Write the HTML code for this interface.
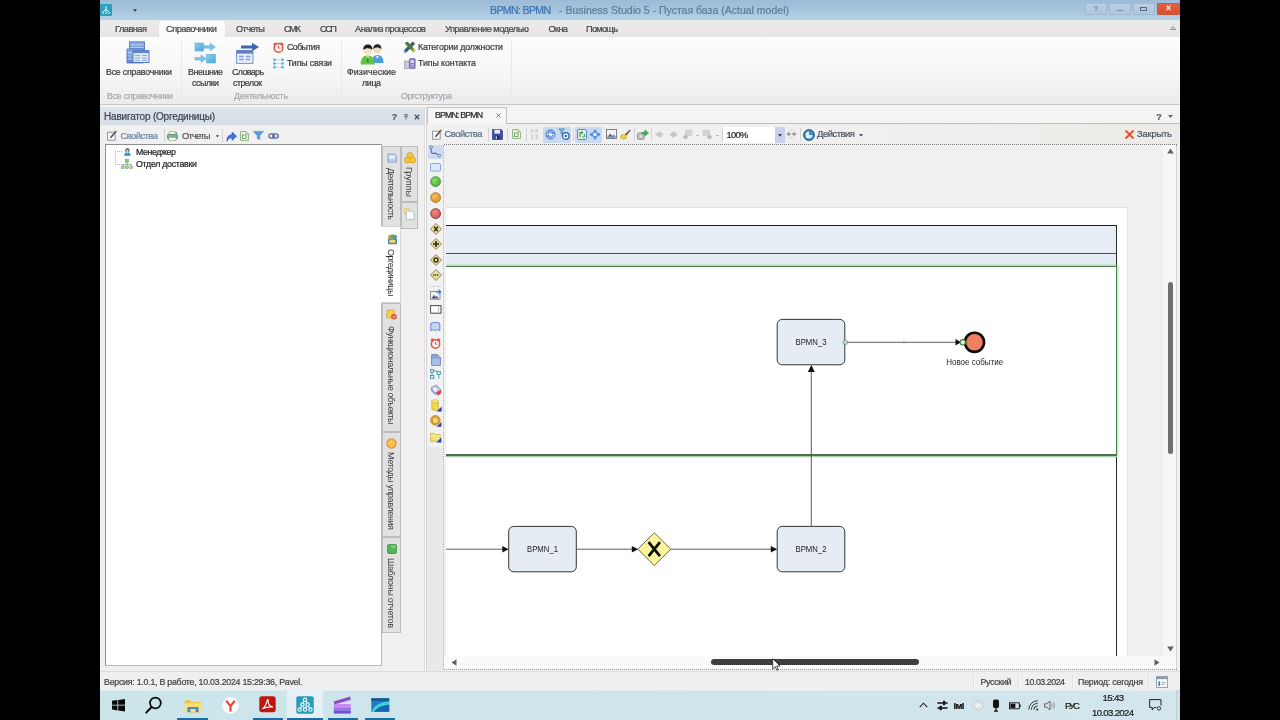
<!DOCTYPE html>
<html lang="ru">
<head>
<meta charset="utf-8">
<title>BPMN: BPMN - Business Studio 5</title>
<style>
*{box-sizing:border-box;margin:0;padding:0}
html,body{width:1280px;height:720px;overflow:hidden;background:#000}
body{font-family:"Liberation Sans","DejaVu Sans",sans-serif;font-size:9px;color:#333;position:relative}
#app{position:absolute;left:100px;top:0;width:1080px;height:720px;background:#f0f0f0;overflow:hidden;filter:blur(0.5px)}
#app div,#app span,#app svg{position:absolute}
#app svg{overflow:visible}
.t{white-space:nowrap;line-height:1.16;-webkit-text-stroke:0.22px}
</style>
</head>
<body>

<div id="app">
<div style="left:0px;top:0px;width:1080px;height:20px;background:linear-gradient(#9dbbd6 0%,#a7c4dd 50%,#b3d0e6 92%,#bccfda 100%);"></div>
<svg style="left:0px;top:4px" width="12" height="12" viewBox="0 0 12 12"><rect width="12" height="12" rx="1" fill="#2ba3c0"/><path d="M6 2v3M6 5L3 8M6 5l3 3M3 8v2M9 8v2M6 5v5" stroke="#e8f7fb" stroke-width="1" fill="none"/></svg>
<svg style="left:32.5px;top:8.5px" width="4" height="3" viewBox="0 0 4 3"><path d="M0 0.3h4L2 2.8z" fill="#2b3a4a"/></svg>
<span class="t" style="left:390.0px;top:3.7px;font-size:10.50px;color:#3a74b4;letter-spacing:-0.612px;">BPMN: BPMN</span>
<span class="t" style="left:459.0px;top:3.7px;font-size:10.50px;color:#5d7d9c;letter-spacing:0.008px;">- Business Studio 5 - Пустая база (Actual model)</span>
<div style="left:985px;top:3.3px;width:22px;height:12px;background:linear-gradient(#bccfe4,#adc5de);border:1px solid #a3bbd4;border-radius:1px;"></div>
<div style="left:1009px;top:3.3px;width:22px;height:12px;background:linear-gradient(#bccfe4,#adc5de);border:1px solid #a3bbd4;border-radius:1px;"></div>
<div style="left:1033px;top:3.3px;width:22px;height:12px;background:linear-gradient(#bccfe4,#adc5de);border:1px solid #a3bbd4;border-radius:1px;"></div>
<div style="left:1057px;top:3.3px;width:23px;height:12px;background:linear-gradient(#e0623f,#d8502e);border:1px solid #c8583c;border-radius:1px;"></div>
<span class="t" style="left:994.0px;top:5.2px;font-size:6.50px;color:#7a8fa8;letter-spacing:0.000px;font-weight:bold;">?</span>
<div style="left:1017px;top:9.5px;width:6px;height:1.6px;background:#7a8fa8;"></div>
<div style="left:1040px;top:7px;width:7px;height:4px;border:1px solid #5a6b80;"></div>
<span class="t" style="left:1066.0px;top:4.1px;font-size:8.50px;color:#fbe9e2;letter-spacing:0.000px;font-weight:bold;">×</span>
<div style="left:0px;top:20px;width:1080px;height:17px;background:linear-gradient(#e9ebed,#ebe8e7 55%,#e4e4e4);"></div>
<div style="left:0px;top:37px;width:1080px;height:67px;background:linear-gradient(#fcfcfc 0%,#f7f7f7 55%,#ebebeb 100%);"></div>
<div style="left:0px;top:104px;width:1080px;height:1px;background:#c6c6c6;"></div>
<div style="left:0px;top:105px;width:1080px;height:2px;background:#f3f3f3;"></div>
<div style="left:59px;top:21px;width:66px;height:17px;background:#fbfbfb;border-radius:2px 2px 0 0;box-shadow:0 0 1px #cfcfcf;"></div>
<div style="left:59px;top:37px;width:66px;height:2px;background:#fbfbfb;"></div>
<span class="t" style="left:15.0px;top:23.7px;font-size:9.20px;color:#454545;letter-spacing:-0.503px;">Главная</span>
<span class="t" style="left:66.0px;top:23.7px;font-size:9.20px;color:#454545;letter-spacing:-0.474px;">Справочники</span>
<span class="t" style="left:136.0px;top:23.7px;font-size:9.20px;color:#454545;letter-spacing:-0.560px;">Отчеты</span>
<span class="t" style="left:184.0px;top:23.7px;font-size:9.20px;color:#454545;letter-spacing:-1.282px;">СМК</span>
<span class="t" style="left:220.0px;top:23.7px;font-size:9.20px;color:#454545;letter-spacing:-1.450px;">ССП</span>
<span class="t" style="left:255.0px;top:23.7px;font-size:9.20px;color:#454545;letter-spacing:-0.495px;">Анализ процессов</span>
<span class="t" style="left:345.0px;top:23.7px;font-size:9.20px;color:#454545;letter-spacing:-0.481px;">Управление моделью</span>
<span class="t" style="left:448.5px;top:23.7px;font-size:9.20px;color:#454545;letter-spacing:-0.626px;">Окна</span>
<span class="t" style="left:486.0px;top:23.7px;font-size:9.20px;color:#454545;letter-spacing:-0.707px;">Помощь</span>
<svg style="left:1069.5px;top:26px" width="6" height="5" viewBox="0 0 6 5"><path d="M3 0.5L5.5 3.5h-5z" fill="none" stroke="#777" stroke-width="0.8"/></svg>
<div style="left:81px;top:40px;width:1px;height:61px;background:#e9e9e9;"></div>
<div style="left:241px;top:40px;width:1px;height:61px;background:#e9e9e9;"></div>
<div style="left:411px;top:40px;width:1px;height:61px;background:#e9e9e9;"></div>
<span class="t" style="left:6.0px;top:67.4px;font-size:8.80px;color:#3a3a3a;letter-spacing:-0.212px;">Все справочники</span>
<span class="t" style="left:88.0px;top:67.4px;font-size:8.80px;color:#3a3a3a;letter-spacing:-0.392px;">Внешние</span>
<span class="t" style="left:92.0px;top:78.4px;font-size:8.80px;color:#3a3a3a;letter-spacing:-0.405px;">ссылки</span>
<span class="t" style="left:132.0px;top:67.4px;font-size:8.80px;color:#3a3a3a;letter-spacing:-0.572px;">Словарь</span>
<span class="t" style="left:133.0px;top:78.4px;font-size:8.80px;color:#3a3a3a;letter-spacing:-0.484px;">стрелок</span>
<span class="t" style="left:187.0px;top:41.9px;font-size:8.80px;color:#3a3a3a;letter-spacing:-0.554px;">События</span>
<span class="t" style="left:187.0px;top:58.4px;font-size:8.80px;color:#3a3a3a;letter-spacing:-0.126px;">Типы связи</span>
<span class="t" style="left:247.0px;top:67.4px;font-size:8.80px;color:#3a3a3a;letter-spacing:0.101px;">Физические</span>
<span class="t" style="left:262.0px;top:78.4px;font-size:8.80px;color:#3a3a3a;letter-spacing:-0.328px;">лица</span>
<span class="t" style="left:318.0px;top:41.9px;font-size:8.80px;color:#3a3a3a;letter-spacing:-0.150px;">Категории должности</span>
<span class="t" style="left:318.0px;top:58.4px;font-size:8.80px;color:#3a3a3a;letter-spacing:-0.062px;">Типы контакта</span>
<span class="t" style="left:7.0px;top:90.9px;font-size:8.80px;color:#a3a8ad;letter-spacing:-0.212px;">Все справочники</span>
<span class="t" style="left:134.0px;top:90.9px;font-size:8.80px;color:#a3a8ad;letter-spacing:-0.240px;">Деятельность</span>
<span class="t" style="left:301.0px;top:90.9px;font-size:8.80px;color:#a3a8ad;letter-spacing:-0.323px;">Оргструктура</span>
<div style="left:0px;top:107px;width:324px;height:18px;background:linear-gradient(#dee4ea,#d7dee6);"></div>
<span class="t" style="left:4.0px;top:111.2px;font-size:10.00px;color:#3c4654;letter-spacing:-0.192px;">Навигатор (Оргединицы)</span>
<span class="t" style="left:291.5px;top:110.8px;font-size:9.50px;color:#596573;letter-spacing:0.000px;font-weight:bold;">?</span>
<svg style="left:304px;top:113.5px" width="4" height="6" viewBox="0 0 4 6"><path d="M0.3 0.5h3.4M1 0.5v2.3M3 0.5v2.3M0.3 2.8h3.4M2 2.8v2.8" stroke="#596573" stroke-width="0.8" fill="none"/></svg>
<svg style="left:314px;top:113.5px" width="6" height="6" viewBox="0 0 6 6"><path d="M0.8 0.8l4.4 4.4M5.2 0.8L0.8 5.2" stroke="#4a5563" stroke-width="1.3"/></svg>
<div style="left:0px;top:125px;width:324px;height:547px;background:#f0f0f0;"></div>
<div style="left:5px;top:144px;width:277px;height:522px;background:#fff;border:1px solid #8e8e8e;border-right-color:#b9b9b9;border-bottom-color:#b9b9b9;"></div>
<span class="t" style="left:36.0px;top:146.9px;font-size:8.80px;color:#222;letter-spacing:-0.385px;">Менеджер</span>
<span class="t" style="left:36.0px;top:158.9px;font-size:8.80px;color:#222;letter-spacing:-0.277px;">Отдел доставки</span>
<div style="left:324px;top:107px;width:1px;height:565px;background:#dcdcdc;"></div>
<div style="left:325px;top:107px;width:1px;height:565px;background:#fafafa;"></div>
<div style="left:326px;top:107px;width:1px;height:565px;background:#d4d4d4;"></div>
<div style="left:327px;top:107px;width:753px;height:17px;background:#f4f4f4;"></div>
<div style="left:327px;top:123px;width:753px;height:1px;background:#bdbdbd;"></div>
<div style="left:327px;top:107px;width:80px;height:17px;background:#f6f6f6;border:1px solid #c6c6c6;border-bottom:none;border-radius:1px 1px 0 0;"></div>
<span class="t" style="left:335.0px;top:110.4px;font-size:8.80px;color:#2a2a2a;letter-spacing:-0.860px;">BPMN: BPMN</span>
<svg style="left:395.5px;top:112.5px" width="5" height="5" viewBox="0 0 5 5"><path d="M0.5 0.5l4 4M4.5 0.5l-4 4" stroke="#666" stroke-width="0.9"/></svg>
<span class="t" style="left:1056.0px;top:110.8px;font-size:9.50px;color:#596573;letter-spacing:0.000px;font-weight:bold;">?</span>
<svg style="left:1068px;top:115px" width="5" height="3" viewBox="0 0 5 3"><path d="M0 0h5L2.5 3z" fill="#666"/></svg>
<div style="left:327px;top:124px;width:753px;height:20px;background:linear-gradient(90deg,#f0f0f0 0%,#f0f0f0 55%,#ecebe7 100%);"></div>
<div style="left:344px;top:144px;width:733px;height:1px;border-top:1px dotted #7a7a7a;"></div>
<div style="left:1076px;top:145px;width:1px;height:524px;border-left:1px dotted #bdbdbd;"></div>
<div style="left:344px;top:669px;width:733px;height:1px;border-top:1px dotted #9a9a9a;"></div>
<div style="left:343px;top:145px;width:1px;height:524px;border-left:1px dotted #b5b5b5;"></div>
<div style="left:327px;top:145px;width:16px;height:527px;background:#e9e9e9;"></div>
<div style="left:327px;top:145px;width:16px;height:302px;background:#f2f2f2;"></div>
<div style="left:344px;top:145px;width:719px;height:511px;background:#f0f0f0;"></div>
<div style="left:1063px;top:145px;width:13px;height:511px;background:#f6f6f6;"></div>
<div style="left:344px;top:656px;width:732px;height:13px;background:#fafafa;"></div>
<div style="left:346px;top:207px;width:682px;height:449px;background:#fff;border-top:1px solid #e2e2e2;border-right:1px solid #e4e4e4;"></div>
<div style="left:346px;top:226px;width:670.5px;height:41px;background:#e6edf4;"></div>
<div style="left:346px;top:225px;width:671.3px;height:1.4px;background:#1c1c1c;"></div>
<div style="left:346px;top:253px;width:670.5px;height:1px;background:#4a4f55;"></div>
<div style="left:1016.3px;top:225px;width:1px;height:431px;background:#2a2a2a;"></div>
<div style="left:346px;top:266.3px;width:671.3px;height:189.5px;border:1.6px solid #4c7f4c;border-bottom:2.4px solid #4f6f52;border-left:none;box-shadow:0 0 2px 1px rgba(120,200,120,.6);clip-path:inset(-4px -4px -4px 0);"></div>
<div style="left:346px;top:455.6px;width:671.3px;height:1.3px;background:#a9cfa9;"></div>
<svg style="left:0;top:0" width="1080" height="690" viewBox="0 0 1080 690"><g transform="translate(-100,0)" font-family="Liberation Sans, sans-serif"><g stroke="#4a4a4a" stroke-width="0.9" fill="none"><path d="M446 549.2H503"/><path d="M577 549.2H633"/><path d="M671 549.2H772"/><path d="M811.3 526V371"/><path d="M847 342.3H957"/></g><g fill="#111"><path d="M502.3 545.9l6.4 3.3-6.4 3.3z"/><path d="M631.8 545.9l6.4 3.3-6.4 3.3z"/><path d="M770.8 545.9l6.4 3.3-6.4 3.3z"/><path d="M807.8 372l3.5-7 3.5 7z"/><path d="M955.5 339l5.5 3.3-5.5 3.3z"/></g><rect x="508.7" y="526.4" width="67.6" height="45.4" rx="5" ry="5" fill="#e5ecf3" stroke="#1e1e1e" stroke-width="0.9"/><text x="542.5" y="552.2" font-size="8.6" fill="#222" text-anchor="middle" textLength="31" lengthAdjust="spacingAndGlyphs">BPMN_1</text><rect x="777.2" y="526.4" width="67.6" height="45.4" rx="5" ry="5" fill="#e5ecf3" stroke="#1e1e1e" stroke-width="0.9"/><text x="811" y="552.2" font-size="8.6" fill="#222" text-anchor="middle" textLength="31" lengthAdjust="spacingAndGlyphs">BPMN_2</text><rect x="777.2" y="319.4" width="67.6" height="45.4" rx="5" ry="5" fill="#e5ecf3" stroke="#1e1e1e" stroke-width="0.9"/><text x="811" y="345.2" font-size="8.6" fill="#222" text-anchor="middle" textLength="31" lengthAdjust="spacingAndGlyphs">BPMN_3</text><path d="M654.3 532.8L670.8 549.2 654.3 565.6 637.8 549.2z" fill="#fbf49c" stroke="#5a5a4a" stroke-width="0.9"/><path d="M648.6 542.2l11.4 14M660 542.2l-11.4 14" stroke="#0a0a0a" stroke-width="2.7" fill="none"/><circle cx="845.3" cy="342.3" r="2.3" fill="#c4d8cc" stroke="#6f8f88" stroke-width="0.8"/><circle cx="904" cy="342.3" r="1.3" fill="#9d95cf"/><circle cx="974.5" cy="342.3" r="9.6" fill="#f0805f" stroke="#0d0d0d" stroke-width="2.6"/><circle cx="962.8" cy="342.3" r="2.7" fill="#dff0df" stroke="#3f7a3f" stroke-width="1.1"/><text x="974.7" y="364.8" font-size="8.6" fill="#222" text-anchor="middle" textLength="57" lengthAdjust="spacingAndGlyphs">Новое событие</text></g></svg>
<svg style="left:1066.5px;top:148px" width="7" height="6" viewBox="0 0 7 6"><path d="M3.5 0.5L6.8 5.5H0.2z" fill="#5f5f5f"/></svg>
<svg style="left:1066.5px;top:646px" width="7" height="6" viewBox="0 0 7 6"><path d="M0.2 0.5h6.6L3.5 5.5z" fill="#5f5f5f"/></svg>
<div style="left:1067.5px;top:282px;width:5.5px;height:172px;background:#6f6f6f;border-radius:3px;"></div>
<svg style="left:351px;top:658.5px" width="6" height="7" viewBox="0 0 6 7"><path d="M5.5 0.2v6.6L0.5 3.5z" fill="#5f5f5f"/></svg>
<svg style="left:1054px;top:658.5px" width="6" height="7" viewBox="0 0 6 7"><path d="M0.5 0.2v6.6L5.5 3.5z" fill="#5f5f5f"/></svg>
<div style="left:611px;top:659px;width:208px;height:5.5px;background:#3f3f3f;border-radius:3px;"></div>
<svg style="left:672px;top:658px" width="9" height="13" viewBox="0 0 9 13"><path d="M0.7 0.7v10.2l2.5-2.3 1.7 3.7 1.5-0.7-1.7-3.6h3.3z" fill="#fff" stroke="#222" stroke-width="0.8" stroke-linejoin="round"/></svg>
<svg style="left:26px;top:41px" width="24" height="24" viewBox="0 0 24 24"><defs><linearGradient id="gw" x1="0" y1="0" x2="0" y2="1"><stop offset="0" stop-color="#8fb0e6"/><stop offset="1" stop-color="#5f86cf"/></linearGradient></defs><rect x="3.5" y="0.8" width="15" height="12" fill="url(#gw)" stroke="#4d70b8" stroke-width="0.8"/><path d="M4.5 4h13M4.5 6.5h13M4.5 9h13" stroke="#c4d6f3" stroke-width="0.9"/><rect x="1" y="8" width="16" height="14" fill="url(#gw)" stroke="#4d70b8" stroke-width="0.8"/><path d="M2 12h14M2 15h14M2 18h14" stroke="#c4d6f3" stroke-width="0.9"/><rect x="7" y="9.5" width="16" height="12" fill="#dfe9fa" stroke="#4d70b8" stroke-width="0.9"/><rect x="7" y="9.5" width="16" height="2.6" fill="#5f86cf"/><path d="M9 14.5h5M16 14.5h5M9 17h5M16 17h5M9 19.3h5M16 19.3h5" stroke="#8aa9de" stroke-width="1"/></svg>
<svg style="left:94px;top:42px" width="22" height="22" viewBox="0 0 22 22"><defs><linearGradient id="gb" x1="0" y1="0" x2="1" y2="1"><stop offset="0" stop-color="#8fd0ee"/><stop offset="1" stop-color="#4ba6d6"/></linearGradient></defs><rect x="1" y="1" width="8.6" height="8" fill="url(#gb)" stroke="#5aaad6" stroke-width="0.6"/><path d="M10 3.8h6.2V1.2L21.4 5 16.2 8.8V6.2H10z" fill="#79c4e8" stroke="#5aaad6" stroke-width="0.5"/><rect x="12.6" y="12.4" width="8.8" height="8.6" fill="url(#gb)" stroke="#5aaad6" stroke-width="0.6"/><path d="M0.8 15.5h6.2v-2.6l5.2 3.8-5.2 3.8v-2.6H0.8z" fill="#79c4e8" stroke="#5aaad6" stroke-width="0.5"/></svg>
<svg style="left:136px;top:42px" width="24" height="22" viewBox="0 0 24 22"><path d="M5 3.4h11V0.8L23 5l-7 4.2V6.6H5z" fill="#3f66b3"/><rect x="0.6" y="8.4" width="16.4" height="13" fill="#e6edf8" stroke="#6b8cc9" stroke-width="0.9"/><rect x="0.6" y="8.4" width="16.4" height="3.2" fill="#5b80c6"/><path d="M3 14.6h4.6M9.8 14.6h4.6M3 17.6h4.6M9.8 17.6h4.6" stroke="#7f9fd6" stroke-width="1.5"/></svg>
<svg style="left:173px;top:42px" width="11" height="11" viewBox="0 0 11 11"><circle cx="2.3" cy="2.2" r="1.8" fill="#e2614f"/><circle cx="8.7" cy="2.2" r="1.8" fill="#e2614f"/><circle cx="5.5" cy="5.9" r="4.3" fill="#fdf3ef" stroke="#de5644" stroke-width="1.5"/><path d="M5.5 3.6v2.5h2" stroke="#c24d3e" stroke-width="0.8" fill="none"/></svg>
<svg style="left:173px;top:58px" width="11" height="11" viewBox="0 0 11 11"><g fill="#4da8dc"><rect x="0.3" y="0.6" width="2.4" height="2.2"/><rect x="0.3" y="4.4" width="2.4" height="2.2"/><rect x="0.3" y="8.2" width="2.4" height="2.2"/><rect x="8.3" y="0.6" width="2.4" height="2.2"/><rect x="8.3" y="4.4" width="2.4" height="2.2"/><rect x="8.3" y="8.2" width="2.4" height="2.2"/></g><path d="M3.2 1.7h4.6M3.2 5.5h4.6M3.2 9.3h4.6" stroke="#86c6ea" stroke-width="1" stroke-dasharray="1.2 0.8"/></svg>
<svg style="left:260px;top:43px" width="24" height="22" viewBox="0 0 24 22"><path d="M11.5 20c0-5 2-8 6-8s6 3 6 8z" fill="#4f9be0"/><circle cx="17.3" cy="6.6" r="3.9" fill="#f1d9bf"/><path d="M13.2 6.2c0-3.6 1.8-5 4.2-5s4.2 1.4 4 5c-1.6-1.6-5.4-2.6-8.2 0z" fill="#22221f"/><path d="M16 13l1.4 3 1.4-3z" fill="#e8f2fb"/><path d="M0.6 21.4c0-5.6 2.4-9 7-9s7 3.4 7 9z" fill="#64c43f"/><circle cx="7.8" cy="7.4" r="4.3" fill="#f6e2c8"/><path d="M3.2 7c0-4 2-5.6 4.6-5.6S12.6 3 12.4 7c-1.8-1.8-6-2.8-9.2 0z" fill="#1e1e1c"/><path d="M6.2 13.4l1.6 3.6 1.6-3.6z" fill="#eef8e8"/><path d="M7.2 14.6h1.2l0.5 4-1.1 1.3-1.1-1.3z" fill="#3d8a2a"/></svg>
<svg style="left:303px;top:41px" width="13" height="12" viewBox="0 0 13 12"><path d="M9.6 0.6l2.6 2.2L3.6 11.2 0.8 11.6 1.4 8.8z" fill="#3d5f73"/><path d="M1.4 8.8l2.2 2.4-2.8 0.4z" fill="#5b9bd8"/><path d="M2.6 1.2L4.8 0.8 12.4 9.6 10.6 11.4 2 2.8z" fill="#4a7a3a"/><path d="M9 7.2l3.4 2.4-1.8 1.8z" fill="#e8c93a"/></svg>
<svg style="left:304px;top:58px" width="12" height="11" viewBox="0 0 12 11"><rect x="0.4" y="3" width="4.8" height="7.6" fill="#c9ccd8" stroke="#8a8fa8" stroke-width="0.6"/><rect x="5.4" y="0.6" width="5.8" height="10" rx="0.8" fill="#8b7fc0" stroke="#6a5ea3" stroke-width="0.6"/><rect x="6.6" y="2" width="3.4" height="3" fill="#d9d4ef"/><path d="M6.6 6.6h3.4M6.6 8.2h3.4" stroke="#cfc8ea" stroke-width="0.8"/></svg>
<svg style="left:7px;top:129.5px" width="10" height="11" viewBox="0 0 10 11"><rect x="0.6" y="2.2" width="7.6" height="8" fill="#fbfbfb" stroke="#8a8a8a" stroke-width="0.9"/><path d="M8.8 0.4l1 1-5 6.2-1.8 0.8 0.6-1.8z" fill="#4a4a4a"/><path d="M8.8 0.4l1 1-0.9 1-1-1z" fill="#c7783c"/></svg>
<span class="t" style="left:20.5px;top:130.8px;font-size:9.40px;color:#6f88aa;letter-spacing:-0.540px;">Свойства</span>
<div style="left:64px;top:129px;width:1px;height:13px;background:#d5d5d5;"></div>
<svg style="left:67px;top:131px" width="11" height="10" viewBox="0 0 11 10"><path d="M2.6 0.6h5.6l1 3H1.6z" fill="#f4f7f4" stroke="#8a9a8a" stroke-width="0.6"/><rect x="0.5" y="3.4" width="10" height="4.6" rx="0.8" fill="#7fb58b" stroke="#4f8a5e" stroke-width="0.7"/><rect x="2" y="6.4" width="7" height="3" fill="#fdfdfd" stroke="#8a9a8a" stroke-width="0.6"/><path d="M8.6 1.2l1.6 1.4" stroke="#3a3a3a" stroke-width="1"/></svg>
<span class="t" style="left:82.0px;top:130.8px;font-size:9.40px;color:#555;letter-spacing:-0.798px;">Отчеты</span>
<svg style="left:115.5px;top:134.8px" width="3" height="3" viewBox="0 0 3 3"><path d="M0 0.3h3L1.5 2.6z" fill="#333"/></svg>
<div style="left:122px;top:129px;width:1px;height:13px;background:#d5d5d5;"></div>
<svg style="left:125.5px;top:130.5px" width="11" height="11" viewBox="0 0 11 11"><path d="M1 10.4C0.6 6 2.6 3.8 6 3.8V1l4.6 4.2L6 9.4V6.8C3.6 6.8 2 7.8 1 10.4z" fill="#3f72d8" stroke="#2c55b3" stroke-width="0.6" stroke-linejoin="round"/></svg>
<svg style="left:140px;top:131px" width="9" height="10" viewBox="0 0 9 10"><path d="M0.6 0.6h5.4l2.4 2.4v6.4H0.6z" fill="#f3f8ee" stroke="#84a874" stroke-width="0.9"/><path d="M6 0.6v2.4h2.4" fill="#dfe8d8" stroke="#84a874" stroke-width="0.7"/><rect x="2.4" y="4" width="3.6" height="3.4" fill="#fff" stroke="#5f9a55" stroke-width="0.9"/></svg>
<svg style="left:153px;top:131px" width="11" height="9" viewBox="0 0 11 9"><path d="M0.3 0.4h10.4L6.8 4.6V8.6L4.2 7.4V4.6z" fill="#5a9ae2" stroke="#4a86cf" stroke-width="0.5"/></svg>
<svg style="left:167.5px;top:133px" width="11" height="6" viewBox="0 0 11 6"><rect x="0.8" y="0.9" width="5.4" height="4.2" rx="2.1" fill="none" stroke="#55699c" stroke-width="1.4"/><rect x="4.8" y="0.9" width="5.4" height="4.2" rx="2.1" fill="none" stroke="#55699c" stroke-width="1.4"/></svg>
<div style="left:15px;top:151px;width:7px;height:13.5px;border-left:1px dotted #b5b5b5;border-top:1px dotted #b5b5b5;border-bottom:1px dotted #b5b5b5"></div>
<svg style="left:24px;top:148px" width="7" height="8" viewBox="0 0 7 8"><circle cx="3.4" cy="2.4" r="2.1" fill="#2b3f4f"/><circle cx="3.4" cy="2.8" r="1.3" fill="#e9d6c2"/><path d="M0.2 7.8c0-2.4 1.2-3.6 3.2-3.6s3.2 1.2 3.2 3.6z" fill="#2c8fb0"/><path d="M2.6 4.6l0.8 1.6 0.8-1.6z" fill="#e8f4f8"/></svg>
<svg style="left:21px;top:158.5px" width="12" height="10" viewBox="0 0 12 10"><rect x="4.4" y="0.4" width="3.2" height="2.8" fill="#8cc878" stroke="#5f9a55" stroke-width="0.5"/><path d="M6 3.2v2.2M1.8 7V5.4h8.4V7M6 5.4V7" stroke="#7a8a9a" stroke-width="0.7" fill="none"/><rect x="0.4" y="7" width="2.8" height="2.6" fill="#a8d896" stroke="#6aa35d" stroke-width="0.5"/><rect x="4.6" y="7" width="2.8" height="2.6" fill="#a8d896" stroke="#6aa35d" stroke-width="0.5"/><rect x="8.8" y="7" width="2.8" height="2.6" fill="#a8d896" stroke="#6aa35d" stroke-width="0.5"/></svg>
<div style="left:282px;top:146.4px;width:19px;height:80.4px;background:#e1e1e1;border:1px solid #bcbcbc;"></div>
<div style="left:281px;top:226px;width:20px;height:77px;background:#ffffff;border:1px solid #d6d6d6;border-left:none;"></div>
<div style="left:282px;top:303px;width:19px;height:129px;background:#e1e1e1;border:1px solid #bcbcbc;"></div>
<div style="left:282px;top:432px;width:19px;height:105px;background:#e1e1e1;border:1px solid #bcbcbc;"></div>
<div style="left:282px;top:537px;width:19px;height:96px;background:#e1e1e1;border:1px solid #bcbcbc;"></div>
<div style="left:301px;top:146.4px;width:17px;height:55.6px;background:#e1e1e1;border:1px solid #bcbcbc;"></div>
<div style="left:301px;top:202px;width:17px;height:27px;background:#e1e1e1;border:1px solid #bcbcbc;"></div>
<span class="t" style="left:296.2px;top:167.6px;font-size:9.00px;color:#3c3c3c;letter-spacing:-0.539px;transform-origin:0 0;transform:rotate(90deg);-webkit-text-stroke:0;">Деятельность</span>
<span class="t" style="left:296.2px;top:248.5px;font-size:9.00px;color:#2a2a2a;letter-spacing:-0.478px;transform-origin:0 0;transform:rotate(90deg);-webkit-text-stroke:0;">Оргединицы</span>
<span class="t" style="left:296.2px;top:326.0px;font-size:9.00px;color:#3c3c3c;letter-spacing:-0.520px;transform-origin:0 0;transform:rotate(90deg);-webkit-text-stroke:0;">Функциональные объекты</span>
<span class="t" style="left:296.2px;top:452.0px;font-size:9.00px;color:#3c3c3c;letter-spacing:-0.403px;transform-origin:0 0;transform:rotate(90deg);-webkit-text-stroke:0;">Методы управления</span>
<span class="t" style="left:296.2px;top:558.0px;font-size:9.00px;color:#3c3c3c;letter-spacing:-0.317px;transform-origin:0 0;transform:rotate(90deg);-webkit-text-stroke:0;">Шаблоны отчетов</span>
<span class="t" style="left:313.7px;top:167.0px;font-size:9.00px;color:#3c3c3c;letter-spacing:0.002px;transform-origin:0 0;transform:rotate(90deg);-webkit-text-stroke:0;">Группы</span>
<svg style="left:286.5px;top:153px" width="10" height="10" viewBox="0 0 10 10"><path d="M1 1.2h6.6l1.6 1.6v6.2H1z" fill="#dfe9f8" stroke="#6f8fc6" stroke-width="0.9"/><path d="M1 7h8.2" stroke="#6f8fc6" stroke-width="0.6"/></svg>
<svg style="left:286.5px;top:234px" width="11" height="11" viewBox="0 0 11 11"><circle cx="3.2" cy="3" r="2.3" fill="#d8a43a"/><circle cx="7.8" cy="3" r="2.3" fill="#4a8fd0"/><circle cx="5.5" cy="2.2" r="2" fill="#5fae4a"/><rect x="1" y="4.6" width="9" height="5.6" rx="1" fill="#3f8f9f"/><rect x="2.4" y="5.8" width="6" height="3" fill="#f0d878"/></svg>
<svg style="left:286px;top:309px" width="11" height="11" viewBox="0 0 11 11"><rect x="0.8" y="1" width="7.6" height="8" rx="1" fill="#f3d24e" stroke="#c9a52c" stroke-width="0.7"/><circle cx="8" cy="7.6" r="2.9" fill="#e0583c"/><path d="M6.8 7.6l1 1 1.6-2" stroke="#fff" stroke-width="0.8" fill="none"/></svg>
<svg style="left:286px;top:438px" width="11" height="11" viewBox="0 0 11 11"><circle cx="5.5" cy="5.5" r="4.8" fill="#f0a83c" stroke="#d18a24" stroke-width="0.7"/><circle cx="5.5" cy="5.5" r="2.4" fill="none" stroke="#fbe0a8" stroke-width="0.9"/><path d="M5.5 1.4v8.2M1.4 5.5h8.2" stroke="#fbe0a8" stroke-width="0.6"/></svg>
<svg style="left:286.5px;top:544px" width="10" height="10" viewBox="0 0 10 10"><rect x="0.6" y="0.6" width="8.8" height="8.8" rx="1" fill="#4fb85a" stroke="#2f8f3c" stroke-width="0.8"/><path d="M1.6 1.6h6.8v3.2z" fill="#8fdc95" opacity="0.8"/></svg>
<svg style="left:303.5px;top:152px" width="12" height="12" viewBox="0 0 12 12"><circle cx="6" cy="3.6" r="3" fill="#f4c838" stroke="#c9981c" stroke-width="0.7"/><circle cx="3.4" cy="8" r="3" fill="#f4c838" stroke="#c9981c" stroke-width="0.7"/><circle cx="8.6" cy="8" r="3" fill="#f4c838" stroke="#c9981c" stroke-width="0.7"/></svg>
<svg style="left:304px;top:208px" width="11" height="12" viewBox="0 0 11 12"><rect x="0.6" y="0.8" width="5" height="4.6" fill="#f8e79a" stroke="#d4b84c" stroke-width="0.6"/><path d="M2.4 3h5.4l2.4 2.4v6H2.4z" fill="#fdfdfd" stroke="#9fb2c8" stroke-width="0.8"/></svg>
<svg style="left:332px;top:129px" width="10" height="11" viewBox="0 0 10 11"><rect x="0.6" y="2.2" width="7.6" height="8" fill="#fbfbfb" stroke="#8a8a8a" stroke-width="0.9"/><path d="M8.8 0.4l1 1-5 6.2-1.8 0.8 0.6-1.8z" fill="#4a4a4a"/><path d="M8.8 0.4l1 1-0.9 1-1-1z" fill="#c7783c"/></svg>
<span class="t" style="left:344.5px;top:129.3px;font-size:9.40px;color:#5f6f82;letter-spacing:-0.468px;">Свойства</span>
<div style="left:388px;top:128px;width:1px;height:13px;background:#d2d2d2;"></div>
<div style="left:406.5px;top:128px;width:1px;height:13px;background:#d2d2d2;"></div>
<div style="left:426px;top:128px;width:1px;height:13px;background:#d2d2d2;"></div>
<div style="left:472.5px;top:128px;width:1px;height:13px;background:#d2d2d2;"></div>
<div style="left:534px;top:128px;width:1px;height:13px;background:#d2d2d2;"></div>
<div style="left:622px;top:128px;width:1px;height:13px;background:#d2d2d2;"></div>
<div style="left:700px;top:128px;width:1px;height:13px;background:#d2d2d2;"></div>
<div style="left:550.5px;top:128px;width:1px;height:13px;background:#e8cfd4;"></div>
<svg style="left:392px;top:128.5px" width="11" height="11" viewBox="0 0 11 11"><path d="M0.5 0.5h8.6l1.4 1.4v8.6H0.5z" fill="#3f4fa8" stroke="#2a3682" stroke-width="0.7"/><rect x="2.4" y="0.8" width="5.6" height="3.8" fill="#e8ecf8"/><rect x="2.8" y="6.6" width="5" height="3.6" fill="#1f2a66"/><rect x="3.6" y="7.4" width="1.4" height="2.4" fill="#cfd6f0"/></svg>
<svg style="left:412px;top:129px" width="9" height="10" viewBox="0 0 9 10"><path d="M0.6 0.6h5.4l2.4 2.4v6.4H0.6z" fill="#f3f8ee" stroke="#84a874" stroke-width="0.9"/><path d="M6 0.6v2.4h2.4" fill="#dfe8d8" stroke="#84a874" stroke-width="0.7"/><rect x="2.4" y="4" width="3.6" height="3.4" fill="#fff" stroke="#5f9a55" stroke-width="0.9"/></svg>
<svg style="left:430px;top:128.5px" width="9" height="11" viewBox="0 0 9 11"><path d="M0.5 1h3M5 1h3M0.5 2.8h3M5 2.8h3M1 6.2h2.4M5.4 6.2h2.4M1 8h2.4M5.4 8h2.4M1 9.8h2.4M5.4 9.8h2.4" stroke="#c3c3c3" stroke-width="1"/></svg>
<div style="left:442.5px;top:126.5px;width:28px;height:16px;background:#c9d9f0;border-radius:1px;"></div>
<svg style="left:445px;top:128.5px" width="11" height="11" viewBox="0 0 11 11"><circle cx="5.5" cy="5.5" r="4.4" fill="#dfeafb" stroke="#4a7fd0" stroke-width="1.1"/><path d="M3 5.2A2.6 2.6 0 0 1 8 4.4M8 5.8A2.6 2.6 0 0 1 3 6.6" stroke="#2f66c0" stroke-width="1" fill="none"/><path d="M8.6 2.6v2.2H6.4zM2.4 8.4V6.2h2.2z" fill="#2f66c0"/></svg>
<svg style="left:457.5px;top:128px" width="12" height="12" viewBox="0 0 12 12"><path d="M0.6 0.8h6L4.4 3.4v3L2.8 5.6V3.4z" fill="#7fa8e0" stroke="#4f7cc0" stroke-width="0.5"/><circle cx="7.8" cy="8" r="3.3" fill="#f4f8ff" stroke="#2c5f9f" stroke-width="1.3"/><circle cx="7.8" cy="8" r="1.2" fill="#2c5f9f"/></svg>
<div style="left:474.5px;top:126.5px;width:27px;height:16px;background:#c9d9f0;border-radius:1px;"></div>
<svg style="left:476.5px;top:128.5px" width="10" height="11" viewBox="0 0 10 11"><rect x="0.6" y="0.6" width="8.8" height="9.8" rx="1" fill="#eaf6ea" stroke="#4a7fd0" stroke-width="1"/><path d="M3 8V3.6h2.4L4.6 2.4M5.4 3.6L4.6 4.8" stroke="#3f9a4a" stroke-width="1.2" fill="none"/><path d="M5 8h2.4V5" stroke="#3f9a4a" stroke-width="1" fill="none"/></svg>
<svg style="left:488.5px;top:128.5px" width="12" height="11" viewBox="0 0 12 11"><circle cx="6" cy="5.5" r="2.4" fill="#eaf3ff" stroke="#4f8fe0" stroke-width="1.2"/><path d="M6 0.2l2 2.4H4zM6 10.8l2-2.4H4zM0.4 5.5l2.4-2v4zM11.6 5.5l-2.4-2v4z" fill="#3f7fd8"/></svg>
<svg style="left:506px;top:129px" width="11" height="10" viewBox="0 0 11 10"><rect x="0.5" y="0.5" width="10" height="9" fill="#f2f4f8" stroke="#6c7480" stroke-width="0.9"/><path d="M1.4 8.6l2.8-4 2 2.6 1.4-1.4 2 2.8z" fill="#3f4a5a"/><rect x="1.2" y="6.6" width="8.6" height="2.2" fill="#8fa0b8" opacity="0.7"/></svg>
<svg style="left:520px;top:128.5px" width="11" height="11" viewBox="0 0 11 11"><path d="M10 0.6l0.6 0.8-4.4 5.4-1.4-1.2z" fill="#5a4a3a"/><ellipse cx="3.6" cy="7.8" rx="3.2" ry="2.4" fill="#e8d24a" stroke="#c4a92c" stroke-width="0.6"/></svg>
<svg style="left:537px;top:128.5px" width="12" height="11" viewBox="0 0 12 11"><rect x="0.6" y="4" width="6.4" height="6.4" rx="1.2" fill="#d6d6d6" stroke="#7f7f7f" stroke-width="0.9"/><circle cx="3.8" cy="7.2" r="1.6" fill="#f4f4f4" stroke="#8a8a8a" stroke-width="0.6"/><path d="M5 3.2h2.8V0.8L11.6 4 7.8 7.2V4.9H5z" fill="#3fae4a" stroke="#2a8a36" stroke-width="0.4"/></svg>
<svg style="left:555px;top:131px" width="9" height="7" viewBox="0 0 9 7"><path d="M4.5 0.3L8.7 3.5 4.5 6.7 0.3 3.5z" fill="#c8c8c8"/></svg>
<svg style="left:569px;top:131px" width="9" height="7" viewBox="0 0 9 7"><path d="M4.5 0.3L8.7 3.5 4.5 6.7 0.3 3.5z" fill="#c8c8c8"/></svg>
<svg style="left:582px;top:128.5px" width="11" height="11" viewBox="0 0 11 11"><rect x="3" y="0.6" width="7.4" height="6.4" fill="#d4d4d4"/><path d="M3.6 5.6L6.4 8 3.6 10.6 0.8 8z" fill="#bdbdbd"/></svg>
<div style="left:596px;top:135px;width:3px;height:1px;background:#bdbdbd;"></div>
<svg style="left:602px;top:128.5px" width="11" height="11" viewBox="0 0 11 11"><rect x="0.6" y="0.6" width="7.4" height="6.4" fill="#d4d4d4"/><path d="M7.6 5.6L10.4 8 7.6 10.6 4.8 8z" fill="#bdbdbd"/></svg>
<div style="left:616px;top:135px;width:3px;height:1px;background:#bdbdbd;"></div>
<div style="left:622.5px;top:126.5px;width:52px;height:16px;background:#ffffff;"></div>
<span class="t" style="left:626.5px;top:129.5px;font-size:9.40px;color:#222;letter-spacing:-0.681px;">100%</span>
<div style="left:674.5px;top:126.5px;width:10px;height:16px;background:#c6d1ea;"></div>
<svg style="left:678px;top:134px" width="4" height="3" viewBox="0 0 4 3"><path d="M0 0.2h4L2 2.6z" fill="#222"/></svg>
<svg style="left:686px;top:129px" width="11" height="10" viewBox="0 0 11 10"><path d="M0.4 5l3-2.6v1.8h1.6v1.6H3.4v1.8zM10.6 5l-3-2.6v1.8H6v1.6h1.6v1.8z" fill="#9a9a9a"/><path d="M3 0.8l1 1M5.5 0.4v1.2M8 0.8l-1 1M3 9.2l1-1M5.5 9.6V8.4M8 9.2l-1-1" stroke="#b5b5b5" stroke-width="0.6"/></svg>
<svg style="left:703px;top:128.5px" width="12" height="12" viewBox="0 0 12 12"><circle cx="6" cy="6" r="5.5" fill="#2f6f9a"/><circle cx="6" cy="6" r="4.4" fill="#3f8fd0"/><path d="M6 2.4a3.6 3.6 0 1 0 3.6 3.6H6z" fill="#d8ecfb"/><circle cx="6" cy="6" r="5.5" fill="none" stroke="#1f4f6f" stroke-width="0.7"/></svg>
<span class="t" style="left:717.0px;top:129.3px;font-size:9.40px;color:#4a5260;letter-spacing:-0.455px;">Действия</span>
<svg style="left:759px;top:134px" width="4" height="3" viewBox="0 0 4 3"><path d="M0 0.2h4L2 2.6z" fill="#333"/></svg>
<svg style="left:1024.5px;top:130px" width="9" height="9" viewBox="0 0 9 9"><path d="M1 1l7 7M8 1L1 8" stroke="#e0532c" stroke-width="1.8" stroke-linecap="round"/></svg>
<span class="t" style="left:1037.0px;top:129.3px;font-size:9.40px;color:#4a5260;letter-spacing:-0.201px;">Закрыть</span>
<div style="left:328px;top:144.5px;width:15px;height:14px;background:#cddaf0;border-radius:1px;"></div>
<svg style="left:329px;top:145px" width="13" height="13" viewBox="0 0 13 13"><path d="M2.2 3.4v3.4q0 1.6 1.6 1.6h3q1.6 0 1.6 1.2" fill="none" stroke="#4a6fb0" stroke-width="1.1"/><circle cx="2.2" cy="2.2" r="1.3" fill="#eaf1fb" stroke="#3f5f9f" stroke-width="0.8"/><circle cx="10.2" cy="10.6" r="1.3" fill="#eaf1fb" stroke="#3f5f9f" stroke-width="0.8"/></svg>
<svg style="left:330.2px;top:162.6px" width="11" height="9" viewBox="0 0 11 9"><rect x="0.5" y="0.5" width="10" height="7.6" rx="0.8" fill="#dce8fb" stroke="#7f9fd8" stroke-width="0.9"/></svg>
<svg style="left:330px;top:176px" width="11.2" height="11.2" viewBox="0 0 11.2 11.2"><defs><radialGradient id="g181" cx="0.4" cy="0.35" r="0.7"><stop offset="0" stop-color="#8fe070"/><stop offset="1" stop-color="#3fb02c"/></radialGradient></defs><circle cx="5.6" cy="5.6" r="4.9" fill="url(#g181)" stroke="#3f8f34" stroke-width="0.9"/></svg>
<svg style="left:330px;top:191.6px" width="11.2" height="11.2" viewBox="0 0 11.2 11.2"><defs><radialGradient id="g197" cx="0.4" cy="0.35" r="0.7"><stop offset="0" stop-color="#f4c060"/><stop offset="1" stop-color="#d8901c"/></radialGradient></defs><circle cx="5.6" cy="5.6" r="4.9" fill="url(#g197)" stroke="#a8742c" stroke-width="0.9"/></svg>
<svg style="left:330px;top:207.6px" width="11.2" height="11.2" viewBox="0 0 11.2 11.2"><defs><radialGradient id="g213" cx="0.4" cy="0.35" r="0.7"><stop offset="0" stop-color="#f08a8a"/><stop offset="1" stop-color="#d84f4f"/></radialGradient></defs><circle cx="5.6" cy="5.6" r="4.9" fill="url(#g213)" stroke="#7a2c2c" stroke-width="0.9"/></svg>
<svg style="left:329.6px;top:222.5px" width="12" height="12" viewBox="0 0 12 12"><path d="M6 0.5L11.5 6 6 11.5 0.5 6z" fill="#e9dca4" stroke="#8a7a3c" stroke-width="0.9"/><path d="M4.2 3.8l3.6 4.4M7.8 3.8L4.2 8.2" stroke="#3a3214" stroke-width="1.5"/></svg>
<svg style="left:329.6px;top:238px" width="12" height="12" viewBox="0 0 12 12"><path d="M6 0.5L11.5 6 6 11.5 0.5 6z" fill="#e9dca4" stroke="#8a7a3c" stroke-width="0.9"/><path d="M6 3v6M3 6h6" stroke="#2a2410" stroke-width="1.6"/></svg>
<svg style="left:329.6px;top:253.7px" width="12" height="12" viewBox="0 0 12 12"><path d="M6 0.5L11.5 6 6 11.5 0.5 6z" fill="#e9dca4" stroke="#8a7a3c" stroke-width="0.9"/><circle cx="6" cy="6" r="2" fill="none" stroke="#3a3214" stroke-width="1.4"/></svg>
<svg style="left:329.6px;top:269px" width="12" height="12" viewBox="0 0 12 12"><path d="M6 0.5L11.5 6 6 11.5 0.5 6z" fill="#e9dca4" stroke="#8a7a3c" stroke-width="0.9"/><path d="M3 6h6" stroke="#5a4c1c" stroke-width="1.4" stroke-dasharray="1.4 0.6"/></svg>
<div style="left:330px;top:285.5px;width:11px;height:1px;background:#d6d6d6;"></div>
<svg style="left:330px;top:288px" width="12" height="12" viewBox="0 0 12 12"><rect x="0.6" y="3.4" width="9.4" height="7.8" fill="#eef1f6" stroke="#6f7888" stroke-width="0.8"/><path d="M1.4 10.4l2.6-3.4 1.8 2 1.2-1 1.8 2.4z" fill="#4a5668"/><path d="M6 3.2h2.6V1l3 2.8-3 2.8V4.6H6z" fill="#3f78d8"/></svg>
<svg style="left:330px;top:304.8px" width="12" height="9" viewBox="0 0 12 9"><rect x="0.6" y="0.6" width="10.4" height="7.6" fill="#fdfdfd" stroke="#4a4a4a" stroke-width="1"/><path d="M8.6 0.6v7.6" stroke="#8a8a8a" stroke-width="0.6"/></svg>
<svg style="left:330.4px;top:322px" width="11" height="10" viewBox="0 0 11 10"><path d="M0.8 1.2c2-1 7-1 9 0v7.6c-1.4-1.4-2.6-1.4-4.5 0-1.9-1.4-3.1-1.4-4.5 0z" fill="#c4d6f4" stroke="#5f7fc4" stroke-width="0.9"/></svg>
<svg style="left:330.2px;top:338.4px" width="11" height="11" viewBox="0 0 11 11"><circle cx="2.4" cy="2" r="1.7" fill="#e0604f"/><circle cx="8.6" cy="2" r="1.7" fill="#e0604f"/><circle cx="5.5" cy="6" r="4.2" fill="#fdf4f0" stroke="#dc5444" stroke-width="1.4"/><path d="M5.5 3.8v2.4h1.8" stroke="#b8473a" stroke-width="0.8" fill="none"/></svg>
<svg style="left:330.6px;top:354px" width="10" height="12" viewBox="0 0 10 12"><path d="M0.6 0.6h6l2.8 2.8v8H0.6z" fill="#8fa8dc" stroke="#5f78b4" stroke-width="0.8"/><path d="M6.6 0.6v2.8h2.8z" fill="#dfe8f8" stroke="#5f78b4" stroke-width="0.5"/><path d="M1.2 5h7.6v6H1.2z" fill="#b8c8ea" opacity="0.7"/></svg>
<svg style="left:330.4px;top:369px" width="11" height="11" viewBox="0 0 11 11"><rect x="0.5" y="0.6" width="3" height="2.6" fill="#c8e4f0" stroke="#2c8aa8" stroke-width="0.7"/><rect x="7" y="2.4" width="3.4" height="3" fill="#c8e4f0" stroke="#2c8aa8" stroke-width="0.7"/><rect x="0.5" y="6.6" width="3.4" height="3" fill="#c8e4f0" stroke="#2c8aa8" stroke-width="0.7"/><path d="M2 3.2v3.4M3.6 2h3.4M8.8 5.4v4.4" stroke="#2c8aa8" stroke-width="0.8" fill="none"/></svg>
<svg style="left:330px;top:384px" width="12" height="12" viewBox="0 0 12 12"><path d="M1 3.6L6.4 0.8l4.6 5-5.4 3.4z" fill="#b8c4ea" stroke="#7a86c0" stroke-width="0.6"/><circle cx="5" cy="5.6" r="2.6" fill="#f0f3fb" stroke="#9aa4d0" stroke-width="0.5"/><path d="M5.6 9.2l5.4-3.4v3.4l-3 2.4z" fill="#d8403c"/><path d="M1 3.6v3.2l4.6 5 0-2.6z" fill="#8f9ccf"/></svg>
<svg style="left:330.6px;top:398.6px" width="11" height="13" viewBox="0 0 11 13"><path d="M0.8 2.2v8c0 1.6 6.6 1.6 6.6 0v-8z" fill="#f0d848" stroke="#bfa22c" stroke-width="0.6"/><ellipse cx="4.1" cy="2.2" rx="3.3" ry="1.5" fill="#f9ec94" stroke="#bfa22c" stroke-width="0.6"/><path d="M10.6 7.6v5H5.6z" fill="#2c3fb8"/></svg>
<svg style="left:330px;top:415px" width="12" height="12" viewBox="0 0 12 12"><circle cx="5.4" cy="5.4" r="4.8" fill="#e0a82c" stroke="#a87a1c" stroke-width="0.7"/><path d="M5.4 2.2l2.8 1.6v3.2L5.4 8.6 2.6 7V3.8z" fill="#f6d878" stroke="#a87a1c" stroke-width="0.5"/><path d="M11.4 7v4.8H6.6z" fill="#2c3fb8"/></svg>
<svg style="left:330px;top:432px" width="12" height="11" viewBox="0 0 12 11"><path d="M0.6 1.4h3.6l1 1.2h5v6.6H0.6z" fill="#f4e078" stroke="#c4a83c" stroke-width="0.7"/><path d="M0.6 3.8h9.6" stroke="#fbf0b0" stroke-width="0.8"/><path d="M11.4 5.6v5H6.4z" fill="#2c3fb8"/></svg>
<div style="left:0px;top:672px;width:1080px;height:18px;background:#f0efef;"></div>
<span class="t" style="left:4.0px;top:676.9px;font-size:8.80px;color:#444;letter-spacing:-0.240px;">Версия: 1.0.1, В работе, 10.03.2024 15:29:36, Pavel.</span>
<div style="left:873px;top:675px;width:1px;height:13px;background:#e0e0e0;"></div>
<div style="left:874px;top:675px;width:1px;height:13px;background:#fafafa;"></div>
<div style="left:918px;top:675px;width:1px;height:13px;background:#e0e0e0;"></div>
<div style="left:919px;top:675px;width:1px;height:13px;background:#fafafa;"></div>
<div style="left:972px;top:675px;width:1px;height:13px;background:#e0e0e0;"></div>
<div style="left:973px;top:675px;width:1px;height:13px;background:#fafafa;"></div>
<div style="left:1048px;top:675px;width:1px;height:13px;background:#e0e0e0;"></div>
<div style="left:1049px;top:675px;width:1px;height:13px;background:#fafafa;"></div>
<span class="t" style="left:880.5px;top:676.9px;font-size:8.80px;color:#444;letter-spacing:-0.275px;">Русский</span>
<span class="t" style="left:925.0px;top:676.9px;font-size:8.80px;color:#444;letter-spacing:-0.449px;">10.03.2024</span>
<span class="t" style="left:978.0px;top:676.9px;font-size:8.80px;color:#444;letter-spacing:-0.180px;">Период: сегодня</span>
<svg style="left:1056px;top:676px" width="12" height="12" viewBox="0 0 12 12"><rect x="0.5" y="0.5" width="11" height="11" fill="#f4f8fb" stroke="#8fa5b8"/><rect x="0.5" y="0.5" width="11" height="2.6" fill="#8c9fb2"/><rect x="2.4" y="5.4" width="1.7" height="4.4" fill="#3f78b5"/><path d="M5.4 6.6h4.4M5.4 8.6h3.4" stroke="#9fb2c4" stroke-width="1"/></svg>
<div style="left:0px;top:689.6px;width:1080px;height:31px;background:linear-gradient(90deg,#cbe5ea 0%,#cfe5eb 40%,#d3e5ed 100%);"></div>
<div style="left:0px;top:689.6px;width:1080px;height:1px;background:rgba(255,255,255,.35);"></div>
<div style="left:0px;top:671px;width:1080px;height:1px;background:#dcdcdc;"></div>
<div style="left:1076px;top:689.6px;width:1px;height:31px;background:#bfd0da;"></div>
<div style="left:1077px;top:689.6px;width:3px;height:31px;background:#cfe0ea;"></div>
<div style="left:187px;top:689.6px;width:36px;height:31px;background:#e4f0f5;"></div>
<div style="left:77px;top:718px;width:31px;height:2px;background:#1b6ea3;"></div>
<div style="left:152.5px;top:718px;width:30.5px;height:2px;background:#1b6ea3;"></div>
<div style="left:187px;top:718px;width:36px;height:2px;background:#1b6ea3;"></div>
<div style="left:227.5px;top:718px;width:30px;height:2px;background:#1b6ea3;"></div>
<div style="left:265px;top:718px;width:30px;height:2px;background:#1b6ea3;"></div>
<svg style="left:11.5px;top:698.6px" width="13" height="12.4" viewBox="0 0 13 12.4"><path d="M0 1.8L5.4 1v4.8H0zM6.2 0.9L13 0v5.8H6.2zM0 6.6h5.4v4.8L0 10.6zM6.2 6.6H13v5.8l-6.8-0.9z" fill="#0b0b0b"/></svg>
<svg style="left:45px;top:696px" width="17" height="18" viewBox="0 0 17 18"><circle cx="10.4" cy="7" r="5.4" fill="none" stroke="#0b0b0b" stroke-width="1.7"/><path d="M6.6 11L1.2 16.6" stroke="#0b0b0b" stroke-width="2" stroke-linecap="round"/></svg>
<svg style="left:84px;top:698.5px" width="18" height="14" viewBox="0 0 18 14"><path d="M0.8 1.2h5.6l1.4 1.6h9.4v10.4H0.8z" fill="#f5cf52"/><path d="M0.8 4.6h16.4v8.6H0.8z" fill="#fbe07a"/><path d="M3.4 8h11.2v5.2H3.4z" fill="#4f86c6"/><path d="M6.4 10h5.2v3.2H6.4z" fill="#fbe07a"/><path d="M1.6 2.2h4v0.9h-4z" fill="#d9a62c"/></svg>
<svg style="left:121.5px;top:696.5px" width="17" height="17" viewBox="0 0 17 17"><circle cx="8.5" cy="8.5" r="8.2" fill="#fdfdfd"/><path d="M4.2 3.6l4.3 5.6 4.3-5.6M8.5 9.2v5.4" fill="none" stroke="#e8412c" stroke-width="2.1" stroke-linejoin="round"/></svg>
<svg style="left:159px;top:696px" width="17" height="16.5" viewBox="0 0 17 16.5"><rect x="0.3" y="0.3" width="16.4" height="15.9" rx="2.6" fill="#c0160f"/><path d="M3.6 12.6c1.8-1.2 3.6-4.2 4.6-8.2 0.2-1.2 1.2-1 1 0.2-0.6 3.4 1.8 6 4.6 6.4-3.4-0.4-7.6 0.4-10.2 1.6z" fill="none" stroke="#fff" stroke-width="1.1" stroke-linejoin="round"/></svg>
<svg style="left:196px;top:696px" width="18" height="18" viewBox="0 0 18 18"><rect x="0.3" y="0.3" width="17.4" height="17.4" rx="2" fill="#2a9bb6"/><g fill="none" stroke="#eafaff" stroke-width="1.1"><circle cx="9" cy="3.8" r="1.7"/><circle cx="6.4" cy="8.6" r="1.7"/><circle cx="11.6" cy="8.6" r="1.7"/><circle cx="3.6" cy="13.6" r="1.7"/><circle cx="9" cy="13.6" r="1.7"/><circle cx="14.4" cy="13.6" r="1.7"/><path d="M8.2 5.4L7 7M9.8 5.4L11 7M5.6 10.2L4.4 12M7.2 10.2L8.4 12M10.8 10.2L9.6 12M12.4 10.2L13.6 12"/></g></svg>
<svg style="left:233px;top:696px" width="18.5" height="18" viewBox="0 0 18.5 18"><path d="M0.6 5.4L17 0.6l0.8 3.2L1.4 8.4z" fill="#8a4fc4"/><rect x="0.8" y="8" width="17" height="3.4" fill="#c88af0"/><rect x="0.8" y="11.4" width="17" height="3" fill="#a56fe4"/><rect x="0.8" y="14.4" width="17" height="3.2" fill="#6a4fd8"/></svg>
<svg style="left:270.5px;top:698px" width="18.5" height="14" viewBox="0 0 18.5 14"><rect x="0.3" y="0.3" width="17.9" height="13.4" fill="#1c7fc4"/><rect x="0.3" y="0.3" width="17.9" height="2.6" fill="#155a8c"/><path d="M0.3 13.7C4 7 10 4 18.2 3.6v3.2C11 7.6 6 10 3.4 13.7z" fill="#3fd0d8"/><path d="M3.4 13.7C6 10 11 7.6 18.2 6.8v6.9z" fill="#1565b0"/></svg>
<svg style="left:818.5px;top:701.5px" width="9" height="6" viewBox="0 0 9 6"><path d="M0.7 5.2L4.5 1.2l3.8 4" fill="none" stroke="#222" stroke-width="1.1"/></svg>
<svg style="left:836.5px;top:699.5px" width="11" height="11" viewBox="0 0 11 11"><path d="M0.4 3h10.2M0.4 8h10.2" stroke="#111" stroke-width="1.3"/><rect x="6" y="0.8" width="2.2" height="4.4" fill="#111"/><rect x="2.6" y="5.8" width="2.2" height="4.4" fill="#111"/></svg>
<span class="t" style="left:853.5px;top:700.0px;font-size:9.50px;color:#111;letter-spacing:-0.653px;font-weight:bold;">IмI</span>
<svg style="left:872px;top:699.5px" width="12" height="11" viewBox="0 0 12 11"><ellipse cx="6" cy="5.5" rx="5.4" ry="4.6" fill="#e2e8ea" stroke="#b9c4c8" stroke-width="0.8"/><path d="M2.6 8c1-3.4 3.4-5 6.4-5.2-0.6 3-2.8 4.8-6.4 5.2z" fill="#f8fafa" stroke="#c0cacc" stroke-width="0.5"/></svg>
<svg style="left:891.5px;top:698.5px" width="8" height="13" viewBox="0 0 8 13"><rect x="1" y="0.4" width="6" height="8.6" rx="1.8" fill="#111"/><path d="M4 9v3.2M2 12.2h4" stroke="#111" stroke-width="1.3"/></svg>
<svg style="left:908.5px;top:701.5px" width="12" height="8" viewBox="0 0 12 8"><rect x="0.5" y="0.8" width="9.8" height="6" fill="none" stroke="#111" stroke-width="0.9"/><rect x="1.4" y="1.7" width="5" height="4.2" fill="#111"/><rect x="10.5" y="2.6" width="1.2" height="2.4" fill="#111"/></svg>
<svg style="left:927.5px;top:700px" width="11" height="10.5" viewBox="0 0 11 10.5"><g fill="none" stroke="#333" stroke-width="1"><path d="M0.8 9.6A8.8 8.8 0 0 1 9.6 0.8"/><path d="M3.4 9.6A6.2 6.2 0 0 1 9.6 3.4" /><path d="M6 9.6A3.6 3.6 0 0 1 9.6 6"/></g><circle cx="9.2" cy="9.4" r="1" fill="#222"/></svg>
<svg style="left:944px;top:699.5px" width="12" height="11" viewBox="0 0 12 11"><path d="M0.6 3.8h2.2L6 1v9L2.8 7.2H0.6z" fill="none" stroke="#555" stroke-width="0.9" stroke-linejoin="round"/><path d="M7.6 3.6c0.8 1.2 0.8 2.6 0 3.8M9.2 2.2c1.6 2 1.6 4.6 0 6.6" fill="none" stroke="#777" stroke-width="0.8"/></svg>
<span class="t" style="left:965.0px;top:700.0px;font-size:9.60px;color:#222;letter-spacing:-2.112px;">РУС</span>
<span class="t" style="left:1002.5px;top:692.4px;font-size:9.60px;color:#222;letter-spacing:-0.631px;">15:43</span>
<span class="t" style="left:992.0px;top:706.9px;font-size:9.60px;color:#222;letter-spacing:-0.672px;">10.03.2024</span>
<svg style="left:1048.5px;top:698.5px" width="13" height="12.5" viewBox="0 0 13 12.5"><path d="M7.4 8.4H5.2L3.2 11V8.4H0.6V0.6h11.4v6" fill="none" stroke="#222" stroke-width="1" stroke-linejoin="round"/><circle cx="10" cy="9.4" r="1.7" fill="none" stroke="#222" stroke-width="0.9"/></svg>
</div>
</body>
</html>
